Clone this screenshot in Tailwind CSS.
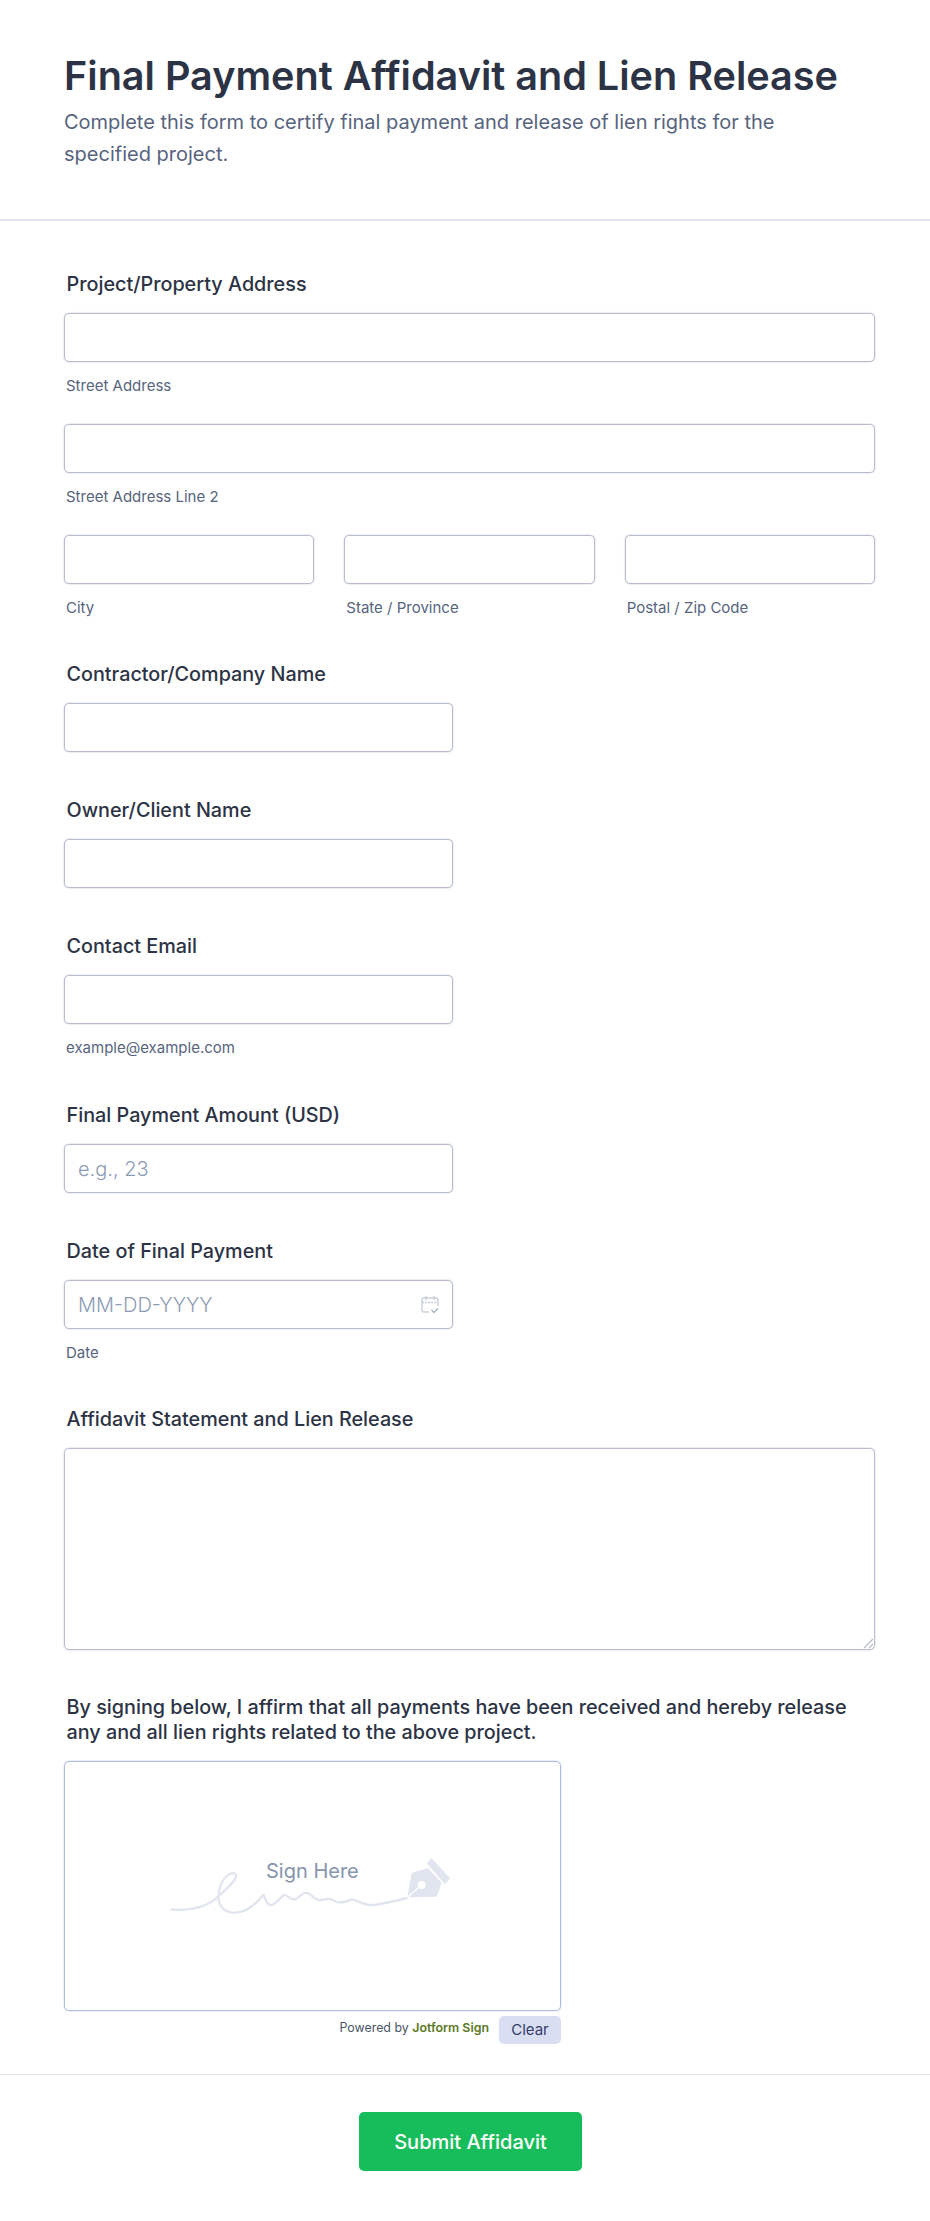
<!DOCTYPE html>
<html><head><meta charset="utf-8"><script src="https://cdn.jsdelivr.net/npm/@tailwindcss/browser@4"></script></head>
<body class="bg-white font-['Inter',sans-serif]">
<div class="w-[930px] h-[2221px] overflow-hidden bg-white">
<header class="h-[221px] border-b-2 border-[#e3e5ee] pl-16 pr-[55px] pt-[50px]">
  <h1 class="text-[39.6px] leading-[52px] font-semibold text-[#2c3345]">Final Payment Affidavit and Lien Release</h1>
  <p class="text-[20px] leading-[32px] text-[#57647e] mt-[4px] w-[760px]">Complete this form to certify final payment and release of lien rights for the specified project.</p>
</header>
<main class="pl-16 pr-[55px] pt-[49px]">
  <label class="block pl-[2.5px] text-[19.8px] leading-[28px] font-medium text-[#2c3345]">Project/Property Address</label>
  <div class="mt-[15px] h-[49px] rounded-[5px] border border-[#b8bdcc] shadow-[0_0_1.5px_#a9b0c4]"></div>
  <p class="mt-[14px] pl-[2px] text-[15px] leading-[20px] text-[#57647e]">Street Address</p>
  <div class="mt-[28px] h-[49px] rounded-[5px] border border-[#b8bdcc] shadow-[0_0_1.5px_#a9b0c4]"></div>
  <p class="mt-[14px] pl-[2px] text-[15px] leading-[20px] text-[#57647e]">Street Address Line 2</p>
  <div class="mt-[28px] grid grid-cols-3 gap-[30px]">
    <div><div class="h-[49px] rounded-[5px] border border-[#b8bdcc] shadow-[0_0_1.5px_#a9b0c4]"></div><p class="mt-[14px] pl-[2px] text-[15px] leading-[20px] text-[#57647e]">City</p></div>
    <div><div class="h-[49px] rounded-[5px] border border-[#b8bdcc] shadow-[0_0_1.5px_#a9b0c4]"></div><p class="mt-[14px] pl-[2px] text-[15px] leading-[20px] text-[#57647e]">State / Province</p></div>
    <div><div class="h-[49px] rounded-[5px] border border-[#b8bdcc] shadow-[0_0_1.5px_#a9b0c4]"></div><p class="mt-[14px] pl-[2px] text-[15px] leading-[20px] text-[#57647e]">Postal / Zip Code</p></div>
  </div>

  <label class="block mt-[42px] pl-[2.5px] text-[19.8px] leading-[28px] font-medium text-[#2c3345]">Contractor/Company Name</label>
  <div class="mt-[15px] w-[388.5px] h-[49px] rounded-[5px] border border-[#b8bdcc] shadow-[0_0_1.5px_#a9b0c4]"></div>

  <label class="block mt-[44px] pl-[2.5px] text-[19.8px] leading-[28px] font-medium text-[#2c3345]">Owner/Client Name</label>
  <div class="mt-[15px] w-[388.5px] h-[49px] rounded-[5px] border border-[#b8bdcc] shadow-[0_0_1.5px_#a9b0c4]"></div>

  <label class="block mt-[44px] pl-[2.5px] text-[19.8px] leading-[28px] font-medium text-[#2c3345]">Contact Email</label>
  <div class="mt-[15px] w-[388.5px] h-[49px] rounded-[5px] border border-[#b8bdcc] shadow-[0_0_1.5px_#a9b0c4]"></div>
  <p class="mt-[14px] pl-[2px] text-[15px] leading-[20px] text-[#57647e]">example@example.com</p>

  <label class="block mt-[43px] pl-[2.5px] text-[19.8px] leading-[28px] font-medium text-[#2c3345]">Final Payment Amount (USD)</label>
  <div class="mt-[15px] w-[388.5px] h-[49px] rounded-[5px] border border-[#b8bdcc] shadow-[0_0_1.5px_#a9b0c4] pl-[13px] flex items-center text-[20px] font-light text-[#8d9bb5]">e.g., 23</div>

  <label class="block mt-[44px] pl-[2.5px] text-[19.8px] leading-[28px] font-medium text-[#2c3345]">Date of Final Payment</label>
  <div class="mt-[15px] w-[388.5px] h-[49px] rounded-[5px] border border-[#b8bdcc] shadow-[0_0_1.5px_#a9b0c4] pl-[13px] pr-[13px] flex items-center justify-between text-[20px] font-light text-[#8d9bb5]">
    <span>MM-DD-YYYY</span>
    <svg width="18" height="20" viewBox="0 0 18 20" fill="none" stroke="#c9cfdc" stroke-width="1.4"><path d="M8 17H3a2 2 0 0 1-2-2V5a2 2 0 0 1 2-2h12a2 2 0 0 1 2 2v6"/><path d="M1 7.5h16" stroke-dasharray="2 1"/><path d="M5 1v4M13 1v4"/><path d="M10.5 15l2.5 2.5 4-4" stroke="#aab4c8"/></svg>
  </div>
  <p class="mt-[14px] pl-[2px] text-[15px] leading-[20px] text-[#57647e]">Date</p>

  <label class="block mt-[42px] pl-[2.5px] text-[19.8px] leading-[28px] font-medium text-[#2c3345]">Affidavit Statement and Lien Release</label>
  <div class="relative mt-[15px] h-[202px] rounded-[5px] border border-[#b8bdd4] shadow-[0_0_1.5px_#a9b0c4]">
    <svg class="absolute right-0 bottom-0" width="12" height="12" viewBox="0 0 12 12" stroke="#b4bac8" stroke-width="1.2"><path d="M2 11l9-9M7 11l4-4"/></svg>
  </div>

  <label class="block mt-[45px] pl-[2.5px] text-[19.8px] leading-[25px] font-medium text-[#2c3345] w-[811px]">By signing below, I affirm that all payments have been received and hereby release any and all lien rights related to the above project.</label>
  <div class="relative mt-[16px] w-[497px] h-[250px] rounded-[5px] border border-[#aebcd8] shadow-[0_0_1.5px_#a9b8d4]">
    <span class="absolute left-[201px] top-[95px] text-[20px] leading-[28px] text-[#8494ae]">Sign Here</span>
    <svg class="absolute left-[85px] top-[58px]" width="330" height="110" viewBox="0 0 990 330" fill="none">
      <path d="M65 268C110 275 165 262 195 238C225 212 262 180 258 165C250 150 225 165 212 195C198 235 205 270 245 278C285 282 320 250 340 225C345 222 345 258 365 255C385 250 392 225 405 225C415 228 420 240 435 238C450 232 455 218 470 218C485 220 490 240 510 240C530 238 530 235 545 238C560 250 580 250 605 238C625 240 640 258 670 255C700 252 735 243 770 234" stroke="#e0e5ef" stroke-width="7" stroke-linecap="round"/>
      <path d="M772 232L785 159L834 144L875 189L860 230Z" fill="#e0e5ef"/>
      <path d="M830 130L845 115L900 175L885 193Z" fill="#e0e5ef"/>
      <circle cx="815" cy="195" r="12" fill="#fff"/>
      <path d="M772 232L815 195" stroke="#fff" stroke-width="4"/>
    </svg>
  </div>
  <div class="flex justify-end items-start w-[497px] mt-[5px]">
    <span class="mr-[10px] mt-[3px] text-[12.4px] leading-[18px] text-[#4b5568]">Powered by <b class="font-semibold text-[#5c7a1f]">Jotform Sign</b></span>
    <span class="w-[62px] h-[28px] rounded-[5px] bg-[#dadef3] flex items-center justify-center text-[15px] text-[#343c6a]">Clear</span>
  </div>
</main>
<footer class="mt-[30px] border-t border-[#e3e5ee] flex justify-center pl-[11px] pt-[37px]">
  <div class="w-[223px] h-[59px] rounded-[5px] bg-[#18bd5b] flex items-center justify-center text-[20px] font-medium text-white">Submit Affidavit</div>
</footer>
</div>
</body></html>
